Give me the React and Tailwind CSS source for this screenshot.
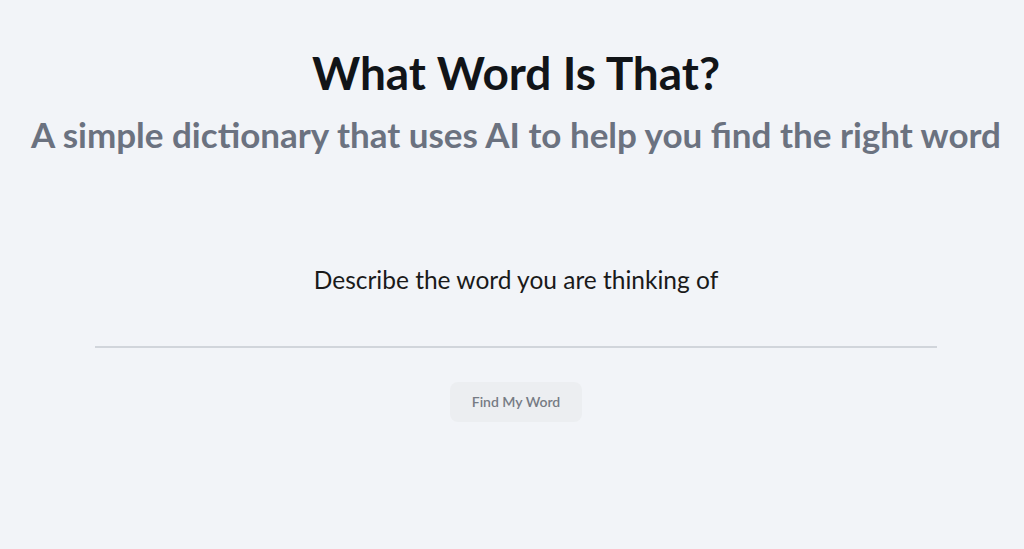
export default function App() {
  return (
    <div className="min-h-screen bg-[#f2f4f8] flex flex-col items-center pl-2 font-['Lato',sans-serif]">
      <h1 className="mt-[49px] text-[46px] leading-[48px] font-bold text-[#111418] whitespace-nowrap">
        What Word Is That?
      </h1>
      <p className="mt-[17px] text-[35px] leading-10 font-bold text-[#6b7280] whitespace-nowrap">
        A simple dictionary that uses AI to help you find the right word
      </p>

      <label className="mt-[110px] text-[24.5px] leading-8 text-[#1a1a1a]">
        Describe the word you are thinking of
      </label>
      <input
        type="text"
        className="mt-3 w-[842px] h-10 bg-transparent border-b-2 border-[#d1d5db] outline-none text-xl text-center"
      />
      <button
        type="button"
        className="mt-[34px] w-[132px] h-10 rounded-lg bg-[#eceef1] text-sm font-semibold text-[#767b84]"
      >
        Find My Word
      </button>
    </div>
  );
}
